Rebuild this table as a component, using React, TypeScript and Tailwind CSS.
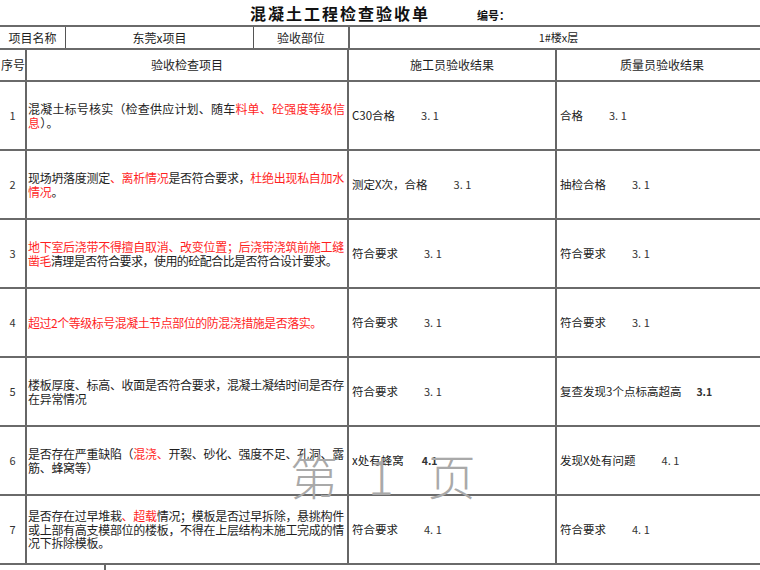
import React from "react";

type Seg = [string, boolean?];
type Line = { t: string; segs: Seg[] };
type Row = {
  n: string;
  lines: Line[];
  c3: [string, string, number, boolean?];
  c4: [string, string, number, boolean?];
};

const W = "tracking-[0.2px]";
const N = "tracking-[-0.3px]";

const rows: Row[] = [
  {
    n: "1",
    lines: [
      { t: W, segs: [["混凝土标号核实（检查供应计划、随车"], ["料单、砼强度等级信", true]] },
      { t: W, segs: [["息", true], ["）。"]] },
    ],
    c3: ["C30合格", "3. 1", 26],
    c4: ["合格", "3. 1", 26],
  },
  {
    n: "2",
    lines: [
      {
        t: N,
        segs: [["现场坍落度测定"], ["、离析情况", true], ["是否符合要求，"], ["杜绝出现私自加水", true]],
      },
      { t: N, segs: [["情况", true], ["。"]] },
    ],
    c3: ["测定X次，合格", "3. 1", 26],
    c4: ["抽检合格", "3. 1", 26],
  },
  {
    n: "3",
    lines: [
      { t: N, segs: [["地下室后浇带不得擅自取消、改变位置；后浇带浇筑前施工缝", true]] },
      { t: "tracking-[-0.55px]", segs: [["凿毛", true], ["清理是否符合要求，使用的砼配合比是否符合设计要求。"]] },
    ],
    c3: ["符合要求", "3. 1", 26],
    c4: ["符合要求", "3. 1", 26],
  },
  {
    n: "4",
    lines: [{ t: "tracking-[-0.5px]", segs: [["超过2个等级标号混凝土节点部位的防混浇措施是否落实。", true]] }],
    c3: ["符合要求", "3. 1", 26],
    c4: ["符合要求", "3. 1", 26],
  },
  {
    n: "5",
    lines: [
      { t: N, segs: [["楼板厚度、标高、收面是否符合要求，混凝土凝结时间是否存"]] },
      { t: N, segs: [["在异常情况"]] },
    ],
    c3: ["符合要求", "3. 1", 26],
    c4: ["复查发现3个点标高超高", "3.1", 15, true],
  },
  {
    n: "6",
    lines: [
      { t: N, segs: [["是否存在严重缺陷（"], ["混浇、", true], ["开裂、砂化、强度不足、孔洞、露"]] },
      { t: N, segs: [["筋、蜂窝等）"]] },
    ],
    c3: ["x处有蜂窝", "4.1", 18, true],
    c4: ["发现X处有问题", "4. 1", 26],
  },
  {
    n: "7",
    lines: [
      { t: N, segs: [["是否存在过早堆栽"], ["、超载", true], ["情况；模板是否过早拆除，悬挑构件"]] },
      { t: N, segs: [["或上部有高支模部位的楼板，不得在上层结构未施工完成的情"]] },
      { t: N, segs: [["况下拆除模板。"]] },
    ],
    c3: ["符合要求", "4. 1", 26],
    c4: ["符合要求", "4. 1", 26],
  },
];

function Result({ v }: { v: [string, string, number, boolean?] }) {
  return (
    <div className="flex items-center h-full pl-[3px] text-[11.5px] text-[#222] whitespace-pre">
      <span>{v[0]}</span>
      <span
        style={{ marginLeft: v[2] }}
        className={v[3] ? "text-[10.5px] font-bold text-[#333]" : "text-[11px] text-[#333]"}
      >
        {v[1]}
      </span>
    </div>
  );
}

export default function App() {
  const font = { fontFamily: '"Noto Sans CJK SC", "Noto Sans", sans-serif' };
  return (
    <div className="relative w-[760px] h-[570px] overflow-hidden bg-white text-[#1e1e1e]" style={font}>
      {/* title */}
      <div className="flex items-end h-[25px] pl-[250px] pb-[2px]">
        <span className="text-[16px] font-bold tracking-[2px] leading-[20px] text-[#111]">
          混凝土工程检查验收单
        </span>
        <span className="ml-[47px] text-[11px] font-bold leading-[16px] text-[#111]">编号：</span>
      </div>

      <div className="w-[767px]">
        {/* header row 1 */}
        <div className="grid grid-cols-[66px_188px_96px_417px] h-[25px] border-t-2 border-b-2 border-[#6a6a6a] text-[12px]">
          <div className="flex items-center justify-center border-r border-[#555]">项目名称</div>
          <div className="flex items-center justify-center border-r border-[#555]">东莞x项目</div>
          <div className="flex items-center justify-center border-r-2 border-[#666]">验收部位</div>
          <div className="flex items-center justify-center text-[11px]">1#楼x层</div>
        </div>
        {/* header row 2 */}
        <div className="grid grid-cols-[27px_322px_208px_210px] h-[32px] border-b-2 border-[#6a6a6a] text-[12px]">
          <div className="flex items-center justify-start pl-[1px] border-r-2 border-[#666]">序号</div>
          <div className="flex items-center justify-center border-r-2 border-[#666]">验收检查项目</div>
          <div className="flex items-center justify-center border-r-2 border-[#666]">施工员验收结果</div>
          <div className="flex items-center justify-center">质量员验收结果</div>
        </div>
        {/* body rows */}
        {rows.map((r) => (
          <div
            key={r.n}
            className="grid grid-cols-[27px_322px_208px_210px] h-[69px] border-b-2 border-[#6a6a6a]"
          >
            <div className="flex items-center justify-center border-r-2 border-[#666] text-[11px] text-[#333]">
              {r.n}
            </div>
            <div className="flex flex-col justify-center pl-[1px] border-r-2 border-[#666] overflow-hidden text-[12px] leading-[13.5px] text-[#1e1e1e]">
              {r.lines.map((line, i) => (
                <div key={i} className={`whitespace-nowrap ${line.t}`}>
                  {line.segs.map((s, j) => (
                    <span key={j} className={s[1] ? "text-[#ff1f1f]" : ""}>
                      {s[0]}
                    </span>
                  ))}
                </div>
              ))}
            </div>
            <div className="border-r-2 border-[#666]">
              <Result v={r.c3} />
            </div>
            <div>
              <Result v={r.c4} />
            </div>
          </div>
        ))}
        {/* partial next row */}
        <div className="grid grid-cols-[106px_1fr] h-[10px]">
          <div className="border-r-2 border-[#666]" />
          <div />
        </div>
      </div>

      {/* page watermark */}
      <div className="absolute left-[290px] top-[446px] flex items-center text-[48px] leading-[56px] font-light text-[#a9a9a9] pointer-events-none">
        <span>第</span>
        <span className="ml-[30px]">1</span>
        <span className="ml-[34px]">页</span>
      </div>
    </div>
  );
}
